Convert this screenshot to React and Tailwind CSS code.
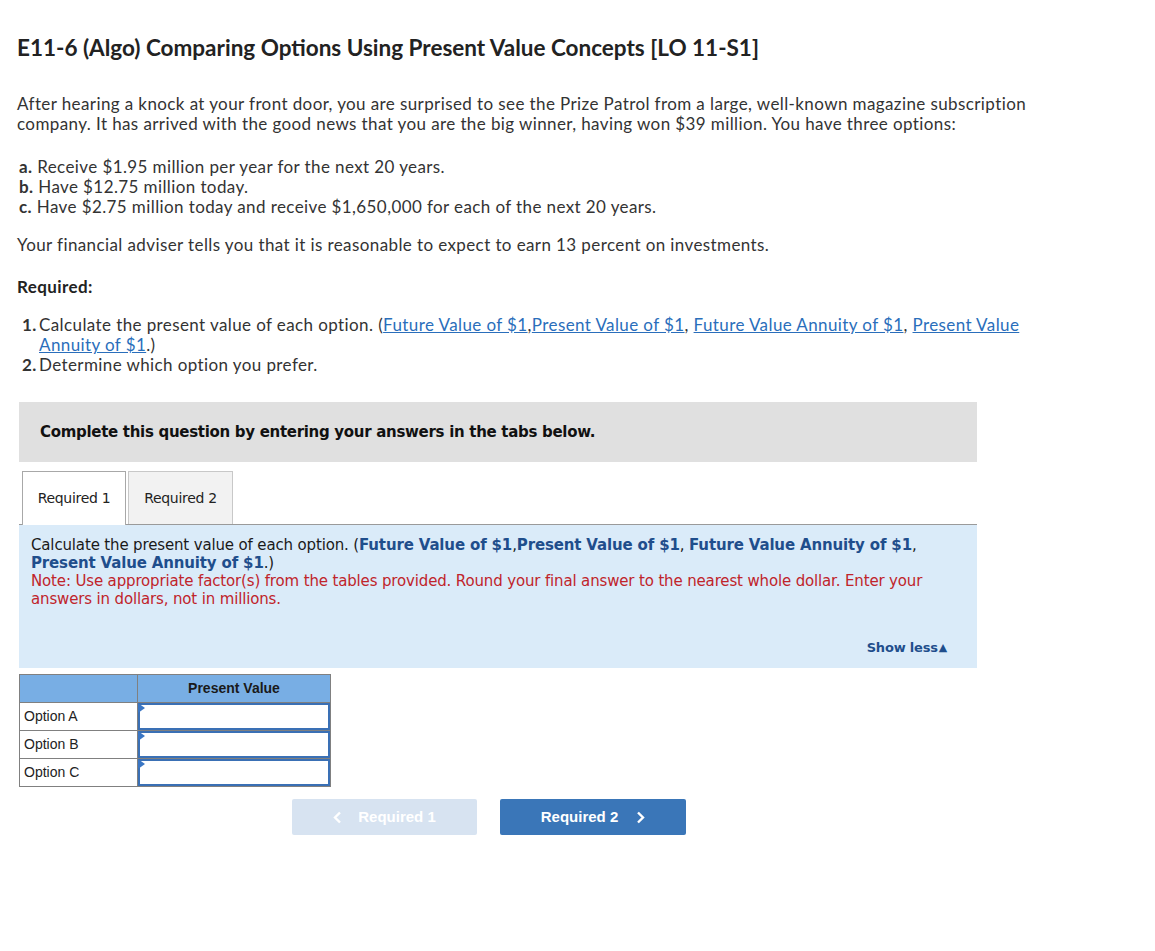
import React from "react";

function Chevron({ dir, className }) {
  return (
    <svg width="9" height="13" viewBox="0 0 9 13" className={className}>
      {dir === "left" ? (
        <polyline points="7,1.5 2,6.5 7,11.5" fill="none" stroke="currentColor" strokeWidth="2.4" />
      ) : (
        <polyline points="2,1.5 7,6.5 2,11.5" fill="none" stroke="currentColor" strokeWidth="2.4" />
      )}
    </svg>
  );
}

export default function App() {
  return (
    <div className="bg-white min-h-[951px] w-[1155px] text-[#333333] font-['Lato',sans-serif]">
      <div className="pl-[17px] pt-[34px] pr-4">
        <h1 className="text-[22.5px] font-bold leading-[28px] text-[#222]">
          E11-6 (Algo) Comparing Options Using Present Value Concepts [LO 11-S1]
        </h1>
        <div className="tracking-[0.4px] text-[17px] leading-[20px]">
          <p className="mt-[32px] w-[1030px]">
            After hearing a knock at your front door, you are surprised to see the Prize Patrol from a large, well-known magazine subscription company. It has arrived with the good news that you are the big winner, having won $39 million. You have three options:
          </p>
          <div className="mt-[23px] pl-[2px]">
            <div><b>a.</b> Receive $1.95 million per year for the next 20 years.</div>
            <div><b>b.</b> Have $12.75 million today.</div>
            <div><b>c.</b> Have $2.75 million today and receive $1,650,000 for each of the next 20 years.</div>
          </div>
          <p className="mt-[18px]">
            Your financial adviser tells you that it is reasonable to expect to earn 13 percent on investments.
          </p>
          <p className="mt-[22px] font-bold text-[#222]">Required:</p>
          <div className="mt-[18px] w-[1010px]">
            <div className="flex">
              <b className="w-[22px] shrink-0 pl-[5px]">1.</b>
              <span>
                Calculate the present value of each option. (
                <a className="text-[#2a6ebb] underline">Future Value of $1</a>,
                <a className="text-[#2a6ebb] underline">Present Value of $1</a>,{" "}
                <a className="text-[#2a6ebb] underline">Future Value Annuity of $1</a>,{" "}
                <a className="text-[#2a6ebb] underline">Present Value Annuity of $1</a>.)
              </span>
            </div>
            <div className="flex">
              <b className="w-[22px] shrink-0 pl-[5px]">2.</b>
              <span>Determine which option you prefer.</span>
            </div>
          </div>
        </div>
      </div>

      <div className="ml-[19px] w-[958px] mt-[27px]">
        <div className="bg-[#e0e0e0] h-[60px] flex items-center pl-[21px] pt-[1px]">
          <span className="font-['DejaVu_Sans',Verdana,sans-serif] font-bold text-[15px] text-[#111] tracking-[-0.3px]">
            Complete this question by entering your answers in the tabs below.
          </span>
        </div>

        <div className="mt-[9px] flex pl-[3px] gap-[2px] border-b border-[#9a9a9a] font-['DejaVu_Sans',Verdana,sans-serif] text-[14px] text-[#222]">
          <div className="w-[104px] h-[54px] border border-[#a8a8a8] border-b-0 bg-white flex items-center justify-center -mb-px tracking-[-0.3px]">
            Required 1
          </div>
          <div className="w-[105px] h-[53px] border border-[#c8c8c8] border-b-0 bg-[#f2f2f2] flex items-center justify-center tracking-[-0.3px]">
            Required 2
          </div>
        </div>

        <div className="bg-[#daebf9] h-[143px] px-[12px] pt-[11px] font-['DejaVu_Sans',Verdana,sans-serif] text-[15px] leading-[18px] tracking-[-0.15px] relative">
          <div className="text-[#1a1a1a] w-[910px]">
            Calculate the present value of each option. (
            <b className="text-[#1f4e8c]">Future Value of $1</b>,
            <b className="text-[#1f4e8c]">Present Value of $1</b>,{" "}
            <b className="text-[#1f4e8c]">Future Value Annuity of $1</b>,{" "}
            <b className="text-[#1f4e8c]">Present Value Annuity of $1</b>.)
          </div>
          <div className="text-[#c0242b] w-[925px]">
            Note: Use appropriate factor(s) from the tables provided. Round your final answer to the nearest whole dollar. Enter your answers in dollars, not in millions.
          </div>
          <div className="absolute right-[30px] bottom-[11px] text-[13px] font-bold text-[#1f4e8c] flex items-center tracking-[-0.2px]">
            Show less<span className="text-[11px] ml-[1px]">▲</span>
          </div>
        </div>

        <table className="mt-[6px] border-collapse font-['Liberation_Sans',Arial,sans-serif] text-[14px] text-[#222]">
          <thead>
            <tr className="h-[28px]">
              <th className="w-[118px] bg-[#78aee4] border border-[#808080]"></th>
              <th className="w-[193px] bg-[#78aee4] border border-[#808080] font-bold text-[14px] text-[#1a1a1a]">Present Value</th>
            </tr>
          </thead>
          <tbody>
            {["Option A", "Option B", "Option C"].map((o) => (
              <tr key={o} className="h-[28px]">
                <td className="border border-[#808080] pl-[4px] py-0">{o}</td>
                <td className="border border-[#808080] p-0 relative">
                  <div className="h-[27px] border-2 border-[#3a70b5] bg-white"></div>
                  <div className="absolute left-0 top-0 w-0 h-0 border-t-[5px] border-b-[5px] border-l-[7px] border-t-transparent border-b-transparent border-l-[#3a76c4]"></div>
                </td>
              </tr>
            ))}
          </tbody>
        </table>

        <div className="mt-[12px] flex gap-[23px] pl-[273px] font-['Liberation_Sans',Arial,sans-serif] font-bold text-[15px]">
          <div className="w-[185px] h-[36px] bg-[#d7e3f1] rounded-[2px] flex items-center justify-center text-white">
            <Chevron dir="left" className="mr-[16px]" />Required 1
          </div>
          <div className="w-[186px] h-[36px] bg-[#3a76b8] rounded-[2px] flex items-center justify-center text-white">
            Required 2<Chevron dir="right" className="ml-[18px]" />
          </div>
        </div>
      </div>
    </div>
  );
}
